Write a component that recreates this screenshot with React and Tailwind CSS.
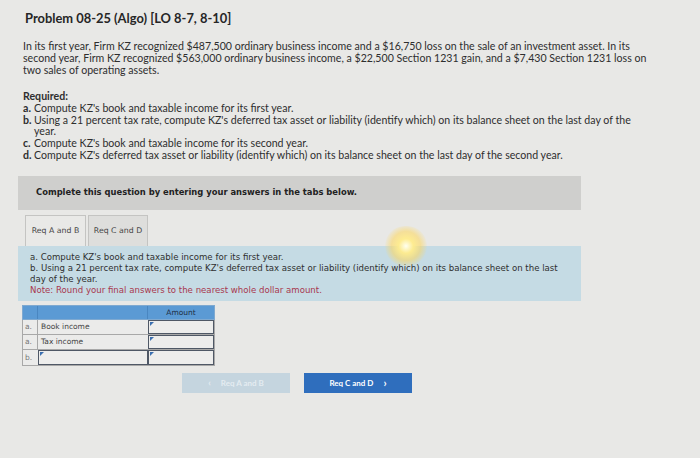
import React from "react";

const main = { fontFamily: "Lato, 'Open Sans', sans-serif" };
const verd = { fontFamily: "'DejaVu Sans', Verdana, sans-serif" };

function Marker() {
  return (
    <span className="absolute left-[1px] top-[1px] w-0 h-0 border-t-[4px] border-r-[4px] border-t-[#3b6fb0] border-r-transparent" />
  );
}

export default function App() {
  return (
    <div className="relative w-[700px] h-[458px] overflow-hidden bg-[#e8e8e6] text-[#2e2e2e]" style={main}>
      <div className="pl-[25px] pt-[9px]">
        <h1 className="text-[12.9px] font-bold leading-[18px] text-[#262626]">Problem 08-25 (Algo) [LO 8-7, 8-10]</h1>
      </div>
      <div className="pl-[23px] pt-[13px] text-[10.6px] leading-[12px]">
        <div className="whitespace-nowrap">In its first year, Firm KZ recognized $487,500 ordinary business income and a $16,750 loss on the sale of an investment asset. In its</div>
        <div className="whitespace-nowrap">second year, Firm KZ recognized $563,000 ordinary business income, a $22,500 Section 1231 gain, and a $7,430 Section 1231 loss on</div>
        <div className="whitespace-nowrap">two sales of operating assets.</div>
      </div>
      <div className="pl-[23px] pt-[15px] text-[10.6px] leading-[11.8px]">
        <div className="font-bold">Required:</div>
        <div className="flex whitespace-nowrap"><span className="w-[11px] font-bold">a.</span><span>Compute KZ's book and taxable income for its first year.</span></div>
        <div className="flex whitespace-nowrap"><span className="w-[11px] font-bold">b.</span><span>Using a 21 percent tax rate, compute KZ's deferred tax asset or liability (identify which) on its balance sheet on the last day of the<br />year.</span></div>
        <div className="flex whitespace-nowrap"><span className="w-[11px] font-bold">c.</span><span>Compute KZ's book and taxable income for its second year.</span></div>
        <div className="flex whitespace-nowrap"><span className="w-[11px] font-bold">d.</span><span>Compute KZ's deferred tax asset or liability (identify which) on its balance sheet on the last day of the second year.</span></div>
      </div>

      <div className="ml-[18px] mt-[14px] w-[563px] h-[34px] bg-[#cfcfcd] flex items-center pl-[18px]" style={verd}>
        <span className="text-[8.4px] font-bold text-[#222]">Complete this question by entering your answers in the tabs below.</span>
      </div>

      <div className="ml-[25px] mt-[5px] flex gap-[2px] h-[31px]" style={verd}>
        <div className="w-[61px] h-[31px] border border-b-0 border-[#c4c4c2] bg-[#e9e9e7] flex items-center justify-center text-[7.8px] text-[#444]">Req A and B</div>
        <div className="w-[60px] h-[31px] border border-b-0 border-[#c4c4c2] bg-[#dededc] flex items-center justify-center text-[7.8px] text-[#444]">Req C and D</div>
      </div>

      <div className="ml-[18px] w-[563px] h-[55px] bg-[#c5dbe4] pl-[12px] pt-[6px] text-[8.6px] leading-[11px] text-[#2f2f2f]" style={verd}>
        <div className="whitespace-nowrap">a. Compute KZ's book and taxable income for its first year.</div>
        <div className="whitespace-nowrap">b. Using a 21 percent tax rate, compute KZ's deferred tax asset or liability (identify which) on its balance sheet on the last</div>
        <div className="whitespace-nowrap">day of the year.</div>
        <div className="whitespace-nowrap text-[#a8384e]">Note: Round your final answers to the nearest whole dollar amount.</div>
      </div>

      <div className="ml-[22px] mt-[4px] w-[193px] text-[7.5px] text-[#444]" style={verd}>
        <div className="flex h-[15px] bg-[#5b9ad4] border border-[#7fa9d0]">
          <div className="w-[15px] border-r border-[#4a86c0]" />
          <div className="w-[110px] border-r border-[#4a86c0]" />
          <div className="flex-1 flex items-center justify-center text-[#1f2f44]">Amount</div>
        </div>
        <div className="flex h-[15px] bg-[#ebebea] border-x border-b border-[#a8a8a8]">
          <div className="w-[15px] border-r border-[#a8a8a8] flex items-center pl-[2px] text-[#777]">a.</div>
          <div className="w-[110px] flex items-center pl-[3px]">Book income</div>
          <div className="relative flex-1 border border-[#4f5866] bg-[#ededec]"><Marker /></div>
        </div>
        <div className="flex h-[15px] bg-[#ebebea] border-x border-b border-[#a8a8a8]">
          <div className="w-[15px] border-r border-[#a8a8a8] flex items-center pl-[2px] text-[#777]">a.</div>
          <div className="w-[110px] flex items-center pl-[3px]">Tax income</div>
          <div className="relative flex-1 border border-[#4f5866] bg-[#ededec]"><Marker /></div>
        </div>
        <div className="flex h-[16px] bg-[#ebebea] border-x border-b border-[#a8a8a8]">
          <div className="w-[15px] flex items-center pl-[2px] text-[#777]">b.</div>
          <div className="relative w-[110px] border border-[#4f5866] bg-[#ededec]"><Marker /></div>
          <div className="relative flex-1 border border-[#4f5866] bg-[#ededec]"><Marker /></div>
        </div>
      </div>

      <div className="ml-[182px] mt-[7px] flex gap-[14px]" style={main}>
        <div className="w-[108px] h-[20px] bg-[#c5d5df] flex items-center justify-center gap-[10px] text-[8px] font-bold text-[#e4ecf1]">
          <span className="text-[9px]">‹</span><span>Req A and B</span>
        </div>
        <div className="w-[108px] h-[20px] bg-[#2f6ebd] flex items-center justify-center gap-[10px] text-[8px] font-bold text-white">
          <span>Req C and D</span><span className="text-[11px] leading-none">›</span>
        </div>
      </div>

      <div
        className="absolute left-[385px] top-[226px] w-[42px] h-[40px] rounded-full pointer-events-none"
        style={{ background: "radial-gradient(circle, rgba(255,255,240,1) 0%, rgba(255,236,140,0.95) 25%, rgba(255,215,90,0.55) 50%, rgba(255,220,120,0) 75%)" }}
      />
    </div>
  );
}
